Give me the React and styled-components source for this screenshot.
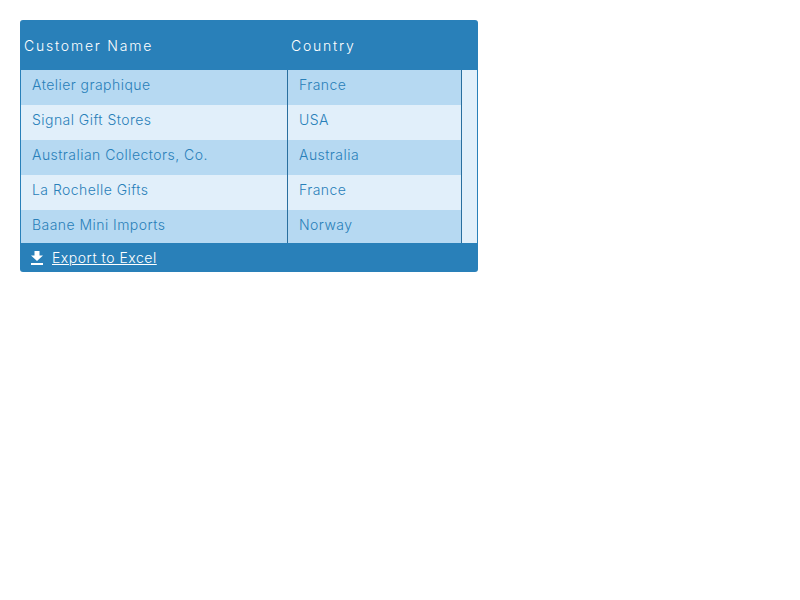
import { createGlobalStyle } from "styled-components"
import styled from "styled-components"

const GlobalStyle = createGlobalStyle`
    html, body {
        margin: 0;
        padding: 0;
        background: #ffffff;
    }
    body {
        font-family: "Inter", "Liberation Sans", sans-serif;
    }
`

const Page = styled.div`
    padding: 20px;
`

const GridWrap = styled.div`
    width: 458px;
    height: 252px;
    box-sizing: border-box;
    background: #2980b9;
    border-radius: 3px;
    display: flex;
    flex-direction: column;
    overflow: hidden;
`

const HeaderRow = styled.div`
    height: 50px;
    flex: none;
    display: flex;
    align-items: center;
    color: #ffffff;
    font-size: 14px;
    font-weight: 350;
    letter-spacing: 1.78px;
`

const HeaderCell = styled.div`
    width: ${(p) => p.$width}px;
    padding-left: ${(p) => p.$pad}px;
    box-sizing: border-box;
`

const Body = styled.div`
    height: 173px;
    flex: none;
    margin: 0 1px;
    background: #e1effa;
    overflow: hidden;
    display: flex;
`

const Rows = styled.div`
    width: 440px;
    flex: none;
    border-right: 1px solid #2a6f9f;
`

const Row = styled.div`
    height: 35px;
    display: flex;
    background: ${(p) => (p.$odd ? "#b6d9f2" : "#e1effa")};
    color: #2980b9;
    font-size: 14px;
    font-weight: 350;
    letter-spacing: 0.45px;
`

const Cell = styled.div`
    box-sizing: border-box;
    width: ${(p) => p.$width}px;
    padding: 6px 0 0 11px;
    line-height: 17px;
    ${(p) => p.$divider && "border-right: 1px solid #2a6f9f;"}
`

const Footer = styled.div`
    flex: 1;
    display: flex;
    align-items: center;
    gap: 9px;
    padding-left: 11px;
    color: #ffffff;
    font-size: 14px;
    font-weight: 350;
    letter-spacing: 0.53px;
`

const ExportLink = styled.a`
    color: #ffffff;
    text-decoration: underline;
`

const data = [
    ["Atelier graphique", "France"],
    ["Signal Gift Stores", "USA"],
    ["Australian Collectors, Co.", "Australia"],
    ["La Rochelle Gifts", "France"],
    ["Baane Mini Imports", "Norway"],
]

const DownloadIcon = () => (
    <svg width="12" height="14" viewBox="0 0 12 14" fill="#ffffff">
        <path d="M3.5 0h5v4.5H12L6 10 0 4.5h3.5z" />
        <rect x="0" y="12" width="12" height="2" />
    </svg>
)

const App = () => {
    return <Page>
        <GlobalStyle />
        <GridWrap>
            <HeaderRow>
                <HeaderCell $width={267} $pad={4}>Customer Name</HeaderCell>
                <HeaderCell $width={191} $pad={4}>Country</HeaderCell>
            </HeaderRow>
            <Body>
                <Rows>
                    {data.map((row, i) => (
                        <Row key={row[0]} $odd={i % 2 === 0}>
                            <Cell $width={267} $divider>{row[0]}</Cell>
                            <Cell $width={173}>{row[1]}</Cell>
                        </Row>
                    ))}
                </Rows>
            </Body>
            <Footer>
                <DownloadIcon />
                <ExportLink>Export to Excel</ExportLink>
            </Footer>
        </GridWrap>
    </Page>
}

export default App
